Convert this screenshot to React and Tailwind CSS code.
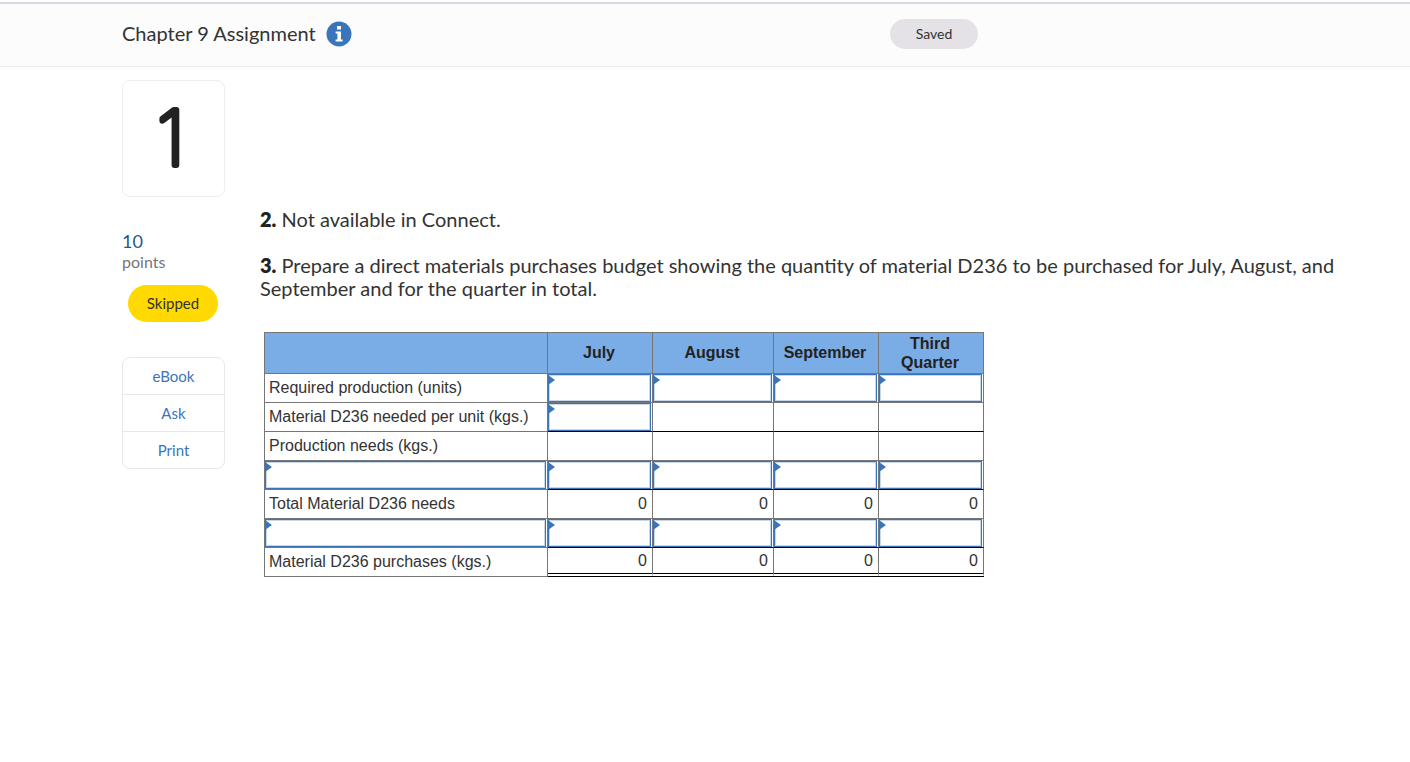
import React from 'react'

const COLUMNS = [
  { name: 'July', width: 'w-[105px]' },
  { name: 'August', width: 'w-[121px]' },
  { name: 'September', width: 'w-[105px]' },
  { name: 'Third Quarter', width: 'w-[105px]' },
]

// inputs: how many cells of the row can be filled in, counted from the left
const ROWS = [
  { id: 'required', label: 'Required production (units)', inputs: 4 },
  { id: 'per-unit', label: 'Material D236 needed per unit (kgs.)', inputs: 1, line: 'single' },
  { id: 'needs', label: 'Production needs (kgs.)', inputs: 0 },
  { id: 'add', inputs: 4, line: 'single' },
  { id: 'total', label: 'Total Material D236 needs', inputs: 0, value: 0 },
  { id: 'less', inputs: 4, line: 'single' },
  { id: 'purchases', label: 'Material D236 purchases (kgs.)', inputs: 0, value: 0, line: 'double' },
]

const LINES = {
  plain: 'border-b pb-0.5',
  single: 'border-b border-b-black',
  double: 'border-b-4 border-b-black [border-bottom-style:double]',
}

const FIELD =
  'block h-7 w-full appearance-none border border-[#3a75bb] bg-white px-2 shadow-[inset_0_0_0_1px_#c5d8ee] outline-none'

function Marker() {
  return (
    <svg className="pointer-events-none absolute left-0 top-px" width="7" height="10" viewBox="0 0 7 10">
      <path d="M0 0L7 5L0 10Z" fill="#3a75bb" />
    </svg>
  )
}

function BudgetTable() {
  return (
    <table className="ml-1 w-[720px] table-fixed border-separate border-spacing-0 border-l border-t border-[#767676] font-['Liberation_Sans',sans-serif] text-[16px] leading-[19px] text-[#333]">
      <thead>
        <tr className="h-[41px] bg-[#7aace5] text-[#222]">
          <td className="w-[283px] border-b border-r border-[#767676]" />
          {COLUMNS.map((col) => (
            <th
              key={col.name}
              scope="col"
              className={`border-b border-r border-[#767676] pb-px pl-2 pr-[10px] pt-0 font-bold ${col.width}`}
            >
              {col.name}
            </th>
          ))}
        </tr>
      </thead>
      <tbody>
        {ROWS.map((row) => (
          <tr key={row.id} className="h-[29px]">
            {row.label ? (
              <th scope="row" className="border-b border-r border-[#767676] pb-0.5 pl-1 text-left font-normal">
                {row.label}
              </th>
            ) : (
              <td className="border-b border-r border-[#767676] p-0 pr-px">
                <div className="relative">
                  <select aria-label="Budget line" className={FIELD} />
                  <Marker />
                </div>
              </td>
            )}
            {COLUMNS.map((col, i) => (
              <td
                key={col.name}
                className={`border-r border-[#767676] text-right ${i < row.inputs && !row.line ? 'border-b' : LINES[row.line || 'plain']}`}
              >
                {i < row.inputs ? (
                  <div className="relative mr-px">
                    <input type="text" aria-label={`${row.label || 'Budget line'}, ${col.name}`} className={FIELD} />
                    <Marker />
                  </div>
                ) : (
                  <span className="block pr-[5px]">{row.value}</span>
                )}
              </td>
            ))}
          </tr>
        ))}
      </tbody>
    </table>
  )
}

export default function App() {
  return (
    <div className="min-h-screen bg-white pt-[2px] font-[Lato,sans-serif] text-[#333]">
      <header className="flex h-[65px] items-center border-b border-t-2 border-b-[#eeeeee] border-t-[#d9d8e0] bg-[#fcfcfc] pb-[2px] pl-[122px]">
        <div className="flex w-[768px] items-center gap-[10px]">
          <h1 className="pb-0.5 text-[20px] font-normal">Chapter 9 Assignment</h1>
          <button type="button" aria-label="Assignment information">
            <svg width="26" height="26" viewBox="0 0 26 26">
              <circle cx="13" cy="13" r="12.5" fill="#3a75bb" />
              <path d="M11 5h4v3.4h-4zM9.6 10.4H15v8.2h1.6v2H9.6v-2h1.8v-6.2H9.6z" fill="#fff" />
            </svg>
          </button>
        </div>
        <button type="button" className="h-[30px] w-[88px] rounded-full bg-[#e4e2e6] pb-0.5 text-[14px]">
          Saved
        </button>
      </header>

      <main className="flex gap-[35px] pl-[122px] pr-16 pt-[13px]">
        <aside className="w-[103px] shrink-0">
          <div className="flex h-[117px] items-center justify-center rounded-lg border border-[#eeeeee]">
            <svg width="60" height="110" viewBox="0 0 60 110" role="img" aria-label="Question 1">
              <text
                x="27"
                y="81"
                textAnchor="middle"
                className="fill-[#222] stroke-[#222] font-[Inter,sans-serif] text-[76px] font-thin"
                strokeWidth="6"
                strokeLinejoin="round"
              >
                1
              </text>
            </svg>
          </div>
          <div className="mt-[33px] text-[18px] leading-[22px] text-[#25578f]">10</div>
          <div className="text-[16px] leading-5 text-[#757575]">points</div>
          <div className="ml-[6px] mt-[13px] flex h-[37px] w-[90px] items-center justify-center rounded-full bg-[#ffd900] text-[15px]">
            Skipped
          </div>
          <nav className="mt-[35px] divide-y divide-[#e8e8e8] rounded-lg border border-[#e8e8e8] text-center text-[15px] leading-[36px] text-[#3a75bb]">
            <a href="#ebook" className="block">eBook</a>
            <a href="#ask" className="block">Ask</a>
            <a href="#print" className="block">Print</a>
          </nav>
        </aside>

        <section className="min-w-0 flex-1 pt-[128px]">
          <div className="mb-8 flex flex-col gap-[23px] text-[20px] leading-[23px]">
            <p>
              <b className="font-extrabold text-[#222]">2.</b> Not available in Connect.
            </p>
            <p>
              <b className="font-extrabold text-[#222]">3.</b> Prepare a direct materials purchases budget showing the
              quantity of material D236 to be purchased for July, August, and September and for the quarter in total.
            </p>
          </div>
          <BudgetTable />
        </section>
      </main>
    </div>
  )
}
